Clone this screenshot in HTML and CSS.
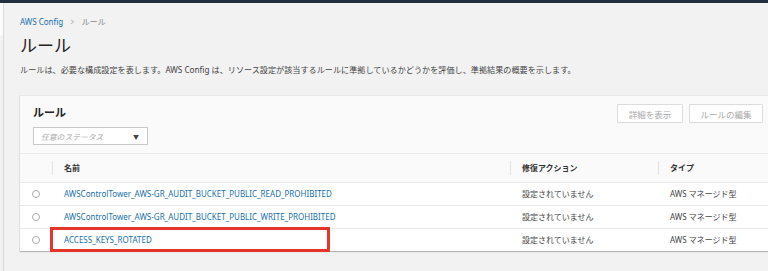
FILE: index.html
```html
<!DOCTYPE html>
<html lang="ja">
<head>
<meta charset="utf-8">
<link rel="stylesheet" href="styles.css">
</head>
<body>
<div class="topbar"></div>
<div class="layout">
  <div class="side"></div>
  <main class="main">
    <nav class="crumbs"><a class="crumb-link">AWS Config</a><span class="crumb-sep">&gt;</span><span class="crumb-cur">ルール</span></nav>
    <h1 class="title">ルール</h1>
    <p class="desc">ルールは、必要な構成設定を表します。AWS Config は、リソース設定が該当するルールに準拠しているかどうかを評価し、準拠結果の概要を示します。</p>
    <section class="card">
      <div class="card-head">
        <div class="head-left">
          <h2 class="card-title">ルール</h2>
          <div class="select"><span class="select-ph">任意のステータス</span><span class="caret">▼</span></div>
        </div>
        <div class="head-btns">
          <button class="btn btn1">詳細を表示</button>
          <button class="btn btn2">ルールの編集</button>
        </div>
      </div>
      <table class="tbl">
        <colgroup><col class="c1"><col class="c2"><col class="c3"><col class="c4"></colgroup>
        <thead>
          <tr><th></th><th><span class="th-in">名前</span></th><th><span class="th-in">修復アクション</span></th><th><span class="th-in">タイプ</span></th></tr>
        </thead>
        <tbody>
          <tr><td class="rad"><span class="radio"></span></td><td class="name"><a class="link">AWSControlTower_AWS-GR_AUDIT_BUCKET_PUBLIC_READ_PROHIBITED</a></td><td>設定されていません</td><td>AWS マネージド型</td></tr>
          <tr><td class="rad"><span class="radio"></span></td><td class="name"><a class="link">AWSControlTower_AWS-GR_AUDIT_BUCKET_PUBLIC_WRITE_PROHIBITED</a></td><td>設定されていません</td><td>AWS マネージド型</td></tr>
          <tr><td class="rad"><span class="radio"></span></td><td class="name"><a class="link">ACCESS_KEYS_ROTATED</a><span class="highlight"></span></td><td>設定されていません</td><td>AWS マネージド型</td></tr>
        </tbody>
      </table>
    </section>
  </main>
</div>
</body>
</html>
```
FILE: styles.css
```css
* { box-sizing: border-box; }
html, body { margin: 0; padding: 0; }
body {
  width: 768px;
  height: 271px;
  overflow: hidden;
  background: #f2f2f2;
  font-family: "Noto Sans", "Noto Sans CJK JP", sans-serif;
  color: #333;
}
.topbar { height: 3px; background: #232f3e; }
.layout { display: flex; height: 268px; }
.side {
  width: 4px;
  flex: none;
  background: linear-gradient(#fbfbfb 0, #fbfbfb 32px, #f2f2f2 33px);
  border-right: 1px solid #d9d9d9;
}
.main { flex: 1; padding-left: 16px; min-width: 0; }
.crumbs {
  margin-top: 14px;
  height: 10px;
  line-height: 10px;
  font-size: 8px;
  display: flex;
  align-items: center;
}
.crumb-link { color: #1a6fab; }
.crumb-sep { color: #999; margin: 0 7px 0 7px; font-size: 8px; transform: scaleX(0.7); }
.crumb-cur { color: #888; }
.title {
  margin: 9px 0 0;
  font-size: 17px;
  line-height: 20px;
  font-weight: 400;
  color: #222;
}
.desc {
  margin: 8px 0 0;
  font-size: 8.15px;
  line-height: 12px;
  color: #444;
  white-space: nowrap;
}
.card {
  margin-top: 20px;
  background: #fff;
  box-shadow: 0 1px 1px rgba(0,0,0,0.22), 0 0 0 1px rgba(0,0,0,0.04);
}
.card-head {
  background: #fafafa;
  display: flex;
  justify-content: space-between;
  align-items: flex-start;
  padding: 10px 5px 8px 13px;
  border-bottom: 1px solid #eaeaea;
}
.card-title {
  margin: 0;
  font-size: 11px;
  line-height: 14px;
  font-weight: 700;
  color: #222;
}
.select {
  margin-top: 7px;
  width: 115px;
  height: 18px;
  border: 1px solid #c9c9c9;
  background: #fff;
  display: flex;
  align-items: center;
  justify-content: space-between;
  padding: 0 8px 0 7px;
}
.select-ph { font-size: 7.8px; font-style: italic; color: #aaa; }
.caret { font-size: 6px; color: #444; }
.head-btns { display: flex; gap: 6px; margin-top: -2px; }
.btn {
  height: 19px;
  border: 1px solid #dcdcdc;
  background: #fff;
  color: #a8a8a8;
  font-family: inherit;
  font-size: 8.5px;
  padding: 0;
  border-radius: 1px;
}
.btn1 { width: 66px; }
.btn2 { width: 74px; }
.tbl {
  width: 100%;
  border-collapse: collapse;
  table-layout: fixed;
  font-size: 8px;
}
.c1 { width: 32px; }
.c2 { width: 458px; }
.c3 { width: 148px; }
.tbl th {
  background: #fafafa;
  height: 28px;
  text-align: left;
  font-weight: 700;
  color: #333;
  padding: 0;
  vertical-align: middle;
  border-bottom: 1px solid #eaeaea;
}
.th-in {
  display: block;
  border-left: 1px solid #e2e2e2;
  padding-left: 11px;
  line-height: 14px;
}
.tbl td {
  height: 23px;
  padding: 0 0 0 12px;
  vertical-align: middle;
  color: #444;
  border-top: 1px solid #eaeaea;
  white-space: nowrap;
}
.tbl tbody tr:first-child td { border-top: none; }
.tbl td.rad { padding: 0 0 0 12px; }
.radio {
  display: block;
  width: 8px;
  height: 8px;
  border-radius: 50%;
  border: 1px solid #aaa;
  background: #fff;
}
.link { color: #1a6fab; }
.name { position: relative; }
.highlight {
  position: absolute;
  left: -2px;
  top: -2px;
  width: 280px;
  height: 25px;
  border: 3px solid #e5352a;
}
```
